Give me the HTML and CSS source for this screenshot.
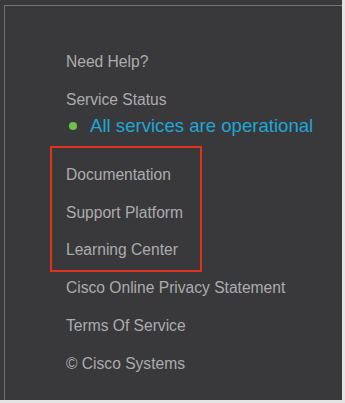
FILE: index.html
```html
<!DOCTYPE html>
<html lang="en">
<head>
    <meta charset="UTF-8">
    <meta name="viewport" content="width=device-width, initial-scale=1.0">
    <title>Need Help?</title>
    <link rel="stylesheet" href="styles.css">
</head>
<body>
    <div class="screen">
        <div class="panel">
            <div class="help">
                <a class="link" href="#">Need Help?</a>
                <a class="link status-title" href="#">Service Status</a>
                <div class="status">
                    <span class="dot"></span>
                    <span>All services are operational</span>
                </div>

                <!-- highlighted links -->
                <div class="highlight">
                    <a class="link" href="#">Documentation</a>
                    <a class="link" href="#">Support Platform</a>
                    <a class="link" href="#">Learning Center</a>
                </div>

                <a class="link after" href="#">Cisco Online Privacy Statement</a>
                <a class="link" href="#">Terms Of Service</a>
                <span class="link">© Cisco Systems</span>
            </div>
        </div>
    </div>
</body>
</html>
```

FILE: styles.css
```css
body {
    margin: 0;
    background-color: #e4e4e4;
    font-family: 'Liberation Sans', Arial, sans-serif;
}

.screen {
    width: 342px;
    height: 400px;
    background-color: #39393b;
    padding-top: 5px;
    padding-left: 4px;
    box-sizing: border-box;
}

.panel {
    height: 100%;
    border-top: 1px solid #747476;
    border-left: 1px solid #747476;
}

.help {
    display: flex;
    flex-direction: column;
    align-items: flex-start;
    gap: 16px;
    padding-top: 45px;
    padding-left: 61px;
}

.link {
    display: block;
    color: #acacae;
    font-size: 15.6px;
    line-height: 22px;
    text-decoration: none;
    white-space: nowrap;
}

.status-title {
    margin-bottom: -13px;
}

.status {
    display: flex;
    align-items: center;
    gap: 13px;
    margin-left: 3px;
    color: #1ea6d6;
    font-size: 18.6px;
    line-height: 24px;
}

.dot {
    width: 8px;
    height: 8px;
    border-radius: 50%;
    background-color: #6ec24b;
}

.highlight {
    display: flex;
    flex-direction: column;
    gap: 15.5px;
    margin-top: -8px;
    margin-left: -16px;
    width: 134px;
    padding: 16px 0 9px 14px;
    border: 2px solid #e0321f;
}

.after {
    margin-top: -11px;
}
```
